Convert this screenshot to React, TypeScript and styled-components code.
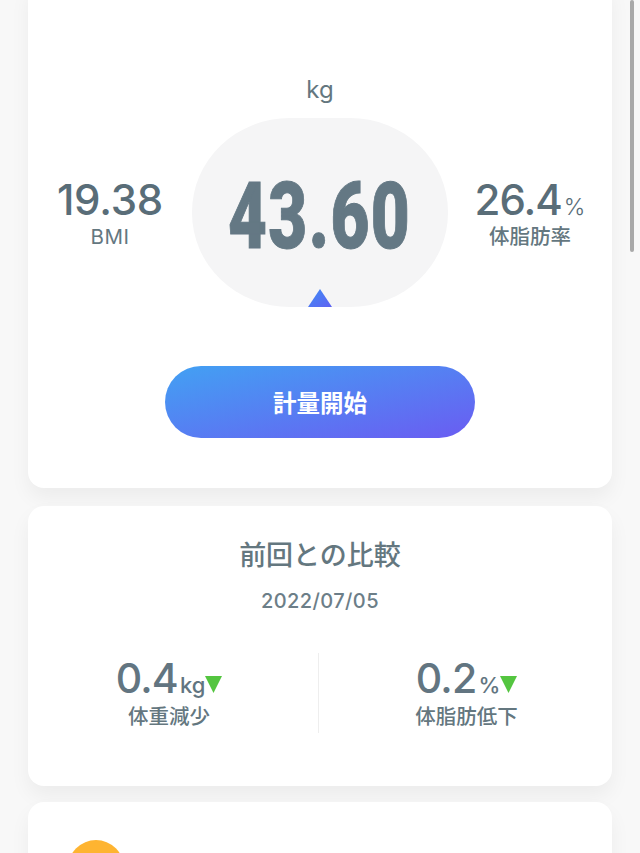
import React from "react";
import styled, { createGlobalStyle } from "styled-components";

const GlobalStyle = createGlobalStyle`
  html, body {
    margin: 0;
    padding: 0;
    background: #f8f8f8;
    overflow: hidden;
  }
  body {
    font-family: "Inter", "Noto Sans CJK JP", sans-serif;
    color: #5f7380;
  }
`;

const Page = styled.div`
  position: relative;
  width: 640px;
  height: 853px;
  overflow: hidden;
  padding: 0 28px;
  box-sizing: border-box;
`;

const ScrollThumb = styled.div`
  position: absolute;
  top: 0;
  right: 6px;
  width: 4px;
  height: 252px;
  border-radius: 2px;
  background: #a9a9a9;
`;

const Card = styled.section`
  background: #fff;
  border-radius: 16px;
  box-shadow: 0 10px 20px rgba(0, 0, 0, 0.05);
`;

const ScaleCard = styled(Card)`
  height: 508px;
  margin-top: -20px;
  padding-top: 95px;
  box-sizing: border-box;
  display: flex;
  flex-direction: column;
  align-items: center;
`;

const Unit = styled.div`
  font-size: 24px;
  line-height: 29px;
  color: #64777f;
`;

const Readout = styled.div`
  display: flex;
  align-items: center;
  margin-top: 14px;
  width: 100%;
`;

const SideStat = styled.div`
  flex: 1;
  display: flex;
  flex-direction: column;
  align-items: center;
`;

const StatValue = styled.div<{ $tight?: boolean }>`
  height: 48px;
  font-size: 42px;
  line-height: 48px;
  font-weight: 500;
  color: #596d78;
  letter-spacing: ${(p) => (p.$tight ? "-1px" : "-0.2px")};
`;

const StatUnit = styled.span`
  font-size: 23px;
  font-weight: 300;
  letter-spacing: 0;
  margin-left: 2px;
`;

const StatLabel = styled.div<{ $bold?: boolean }>`
  height: 26px;
  font-size: 20.5px;
  line-height: 26px;
  font-weight: ${(p) => (p.$bold ? 500 : 400)};
  letter-spacing: ${(p) => (p.$bold ? "0" : "0.5px")};
  color: #64777f;
`;

const Blob = styled.div`
  position: relative;
  flex: none;
  width: 256px;
  height: 189px;
  border-radius: 98px / 94px;
  background: #f5f5f6;
  display: flex;
  align-items: center;
  justify-content: center;
`;

const Weight = styled.div`
  font-family: "Roboto", sans-serif;
  font-size: 92px;
  font-weight: 900;
  line-height: 1;
  color: #647884;
  letter-spacing: 2px;
  -webkit-text-stroke: 1px #647884;
  margin-top: 8px;
  transform: scaleX(0.73);
`;

const Pointer = styled.svg`
  position: absolute;
  left: 116px;
  bottom: 0;
  width: 24px;
  height: 18px;
  display: block;
`;

const StartButton = styled.button`
  margin-top: 59px;
  width: 310px;
  height: 72px;
  border: 0;
  border-radius: 36px;
  background: linear-gradient(to bottom right, #42a1f3 0%, #6a5cf2 100%);
  color: #fff;
  font-family: inherit;
  font-size: 23.5px;
  font-weight: 600;
`;

const CompareCard = styled(Card)`
  height: 280px;
  margin-top: 18px;
  padding-top: 32px;
  box-sizing: border-box;
  display: flex;
  flex-direction: column;
  align-items: center;
`;

const CompareTitle = styled.h2`
  margin: 0;
  font-size: 27px;
  line-height: 36px;
  font-weight: 500;
  color: #64777f;
`;

const CompareDate = styled.div`
  margin-top: 15px;
  font-size: 20px;
  line-height: 24px;
  font-weight: 500;
  letter-spacing: 0.4px;
  color: #6c7e88;
`;

const CompareRow = styled.div`
  margin-top: 40px;
  width: 100%;
  height: 80px;
  display: flex;
`;

const CompareCol = styled.div<{ $width: number }>`
  flex: 0 0 ${(p) => p.$width}px;
  box-sizing: border-box;
  display: flex;
  flex-direction: column;
  align-items: center;
  & + & {
    border-left: 1px solid #eeeeee;
    padding-left: 2px;
  }
`;

const LeftCol = styled(CompareCol)`
  padding-right: 8px;
`;

const DeltaValue = styled.div`
  display: flex;
  align-items: baseline;
  height: 51px;
  font-size: 41px;
  line-height: 50px;
  font-weight: 500;
  letter-spacing: -0.8px;
  color: #627581;
`;

const DeltaUnit = styled.span`
  font-size: 22px;
  font-weight: 500;
  letter-spacing: 0;
  margin-left: 2px;
`;

const DownMark = styled.svg`
  width: 17px;
  height: 17px;
  display: block;
  align-self: flex-end;
  margin-bottom: 11px;
`;

const DeltaLabel = styled.div`
  font-size: 20.5px;
  line-height: 26px;
  font-weight: 500;
  color: #64777f;
`;

const NextCard = styled(Card)`
  height: 120px;
  margin-top: 16px;
  padding: 38px 0 0 40px;
  box-sizing: border-box;
`;

const Avatar = styled.div`
  width: 56px;
  height: 56px;
  border-radius: 50%;
  background: #feb431;
`;

function Down() {
  return (
    <DownMark viewBox="0 0 17 17">
      <polygon points="0,0 17,0 8.5,17" fill="#54c540" />
    </DownMark>
  );
}

export default function App() {
  return (
    <Page>
      <GlobalStyle />
      <ScaleCard>
        <Unit>kg</Unit>
        <Readout>
          <SideStat>
            <StatValue>19.38</StatValue>
            <StatLabel>BMI</StatLabel>
          </SideStat>
          <Blob>
            <Weight>43.60</Weight>
            <Pointer viewBox="0 0 24 18">
              <defs>
                <linearGradient id="pointerFill" x1="0" y1="0" x2="1" y2="1">
                  <stop offset="0" stopColor="#3f8cf5" />
                  <stop offset="1" stopColor="#5f62f2" />
                </linearGradient>
              </defs>
              <polygon points="12,0 24,18 0,18" fill="url(#pointerFill)" />
            </Pointer>
          </Blob>
          <SideStat>
            <StatValue $tight>
              26.4<StatUnit>%</StatUnit>
            </StatValue>
            <StatLabel $bold>体脂肪率</StatLabel>
          </SideStat>
        </Readout>
        <StartButton>計量開始</StartButton>
      </ScaleCard>
      <CompareCard>
        <CompareTitle>前回との比較</CompareTitle>
        <CompareDate>2022/07/05</CompareDate>
        <CompareRow>
          <LeftCol $width={290}>
            <DeltaValue>
              0.4<DeltaUnit>kg</DeltaUnit>
              <Down />
            </DeltaValue>
            <DeltaLabel>体重減少</DeltaLabel>
          </LeftCol>
          <CompareCol $width={294}>
            <DeltaValue>
              0.2<DeltaUnit>%</DeltaUnit>
              <Down />
            </DeltaValue>
            <DeltaLabel>体脂肪低下</DeltaLabel>
          </CompareCol>
        </CompareRow>
      </CompareCard>
      <NextCard>
        <Avatar />
      </NextCard>
      <ScrollThumb />
    </Page>
  );
}
